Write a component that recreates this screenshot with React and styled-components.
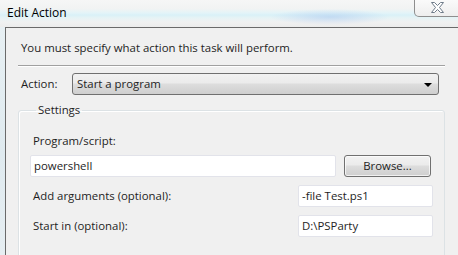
import React from 'react';
import styled, { createGlobalStyle } from 'styled-components';

const Global = createGlobalStyle`
  html, body {
    margin: 0;
    padding: 0;
    overflow: hidden;
  }
  body {
    font-family: "Open Sans", "Noto Sans", sans-serif;
    font-size: 11.4px;
    color: #1e1e1e;
  }
`

const Frame = styled.div`
  width: 458px;
  height: 255px;
  display: flex;
  flex-direction: column;
  overflow: hidden;
  background: linear-gradient(to bottom, #e9f1f4 0%, #dfeaef 60%, #e6eef2 100%);
`

const TitleBar = styled.div`
  height: 27px;
  flex: none;
  display: flex;
  align-items: flex-start;
  padding-left: 7px;
  background:
    radial-gradient(ellipse 60px 8px at 330px 17px, rgba(170, 200, 240, 0.55), transparent),
    linear-gradient(to bottom,
      #f6f6f6 0px,
      #f1f3f3 9px,
      #e3f4f8 13px,
      #d9f1f7 15px,
      #e6f3f5 18px,
      #f0f1f1 22px,
      #ececec 27px);
`

const Title = styled.span`
  margin-top: 5px;
  font-size: 12px;
  line-height: 16px;
  color: #000;
`

const CloseButton = styled.div`
  margin-left: auto;
  margin-top: -1px;
  margin-right: -6px;
  width: 50px;
  height: 18px;
  box-sizing: border-box;
  border: 1px solid #8e8e8e;
  border-top: none;
  border-radius: 0 0 5px 5px;
  background: linear-gradient(to bottom, #fbfbfb, #eeeeee);
  display: flex;
  align-items: center;
  justify-content: center;
  padding-right: 4px;
`

const Client = styled.div`
  flex: 1;
  margin-left: 5px;
  border-left: 1px solid #6a6a6a;
  border-top: 1px solid #6a6a6a;
  background: #f0f0f0;
  padding: 12px 13px 0 12px;
  display: flex;
  flex-direction: column;
`

const Intro = styled.div`
  line-height: 16px;
  padding-left: 3px;
`

const Separator = styled.div`
  margin-top: 9px;
  height: 1px;
  background: #a0a0a0;
  box-shadow: 0 1px 0 #ffffff;
`

const ActionRow = styled.div`
  margin-top: 7px;
  display: flex;
  align-items: center;
`

const Label = styled.span`
  line-height: 16px;
  padding-left: ${p => p.$indent || 0}px;
  width: ${p => (p.$width ? `${p.$width}px` : 'auto')};
  flex: ${p => (p.$grow ? 1 : 'none')};
`

const Select = styled.div`
  width: 367px;
  height: 22px;
  box-sizing: border-box;
  border: 1px solid #707070;
  border-radius: 3px;
  background: linear-gradient(to bottom, #f2f2f2 0%, #ebebeb 45%, #dddddd 50%, #cfcfcf 100%);
  display: flex;
  align-items: center;
  padding: 0 6px 0 4px;
  line-height: 16px;
`

const SelectText = styled.span`
  flex: 1;
`

const Arrow = styled.span`
  width: 0;
  height: 0;
  border-left: 4px solid transparent;
  border-right: 4px solid transparent;
  border-top: 4px solid #000;
  margin-top: 1px;
`

const Group = styled.fieldset`
  margin: 7px 0 0 0;
  padding: 15px 11px 20px 11px;
  border: 1px solid #dce2e5;
  border-radius: 3px;
  box-shadow: inset 1px 1px 0 #ffffff;
  min-width: 0;
`

const Legend = styled.legend`
  margin-left: 6px;
  padding: 0 2px;
  line-height: 16px;
`

const FieldLabel = styled.div`
  line-height: 16px;
  padding-left: 3px;
  margin-bottom: 6px;
`

const Row = styled.div`
  display: flex;
  align-items: center;
  margin-bottom: ${p => p.$last ? 0 : 8}px;
`

const Input = styled.div`
  width: ${p => p.$width}px;
  height: 22px;
  box-sizing: border-box;
  border: 1px solid #e2e3ea;
  border-radius: 2px;
  background: #ffffff;
  padding: 2px 3px 0;
  line-height: 16px;
`

const Button = styled.div`
  margin-left: 8px;
  width: 87px;
  height: 22px;
  box-sizing: border-box;
  border: 1px solid #707070;
  border-radius: 3px;
  background: linear-gradient(to bottom, #f2f2f2 0%, #ebebeb 45%, #dddddd 50%, #cfcfcf 100%);
  box-shadow: inset 0 0 0 1px rgba(255, 255, 255, 0.7);
  display: flex;
  align-items: center;
  justify-content: center;
  line-height: 16px;
`

const CloseIcon = () => (
  <svg width="15" height="11" viewBox="0 0 15 11">
    <path
      d="M1.5 0.5 H4.5 L7.5 3.5 L10.5 0.5 H13.5 L9.5 5.5 L13.5 10.5 H10.5 L7.5 7.5 L4.5 10.5 H1.5 L5.5 5.5 Z"
      fill="#ffffff"
      stroke="#6f7c8a"
      strokeWidth="1"
      strokeLinejoin="round"
    />
  </svg>
)

export default function App() {
  return (
    <>
      <Global />
      <Frame>
        <TitleBar>
          <Title>Edit Action</Title>
          <CloseButton>
            <CloseIcon />
          </CloseButton>
        </TitleBar>
        <Client>
          <Intro>You must specify what action this task will perform.</Intro>
          <Separator />
          <ActionRow>
            <Label $indent={3} $width={51}>Action:</Label>
            <Select>
              <SelectText>Start a program</SelectText>
              <Arrow />
            </Select>
          </ActionRow>
          <Group>
            <Legend>Settings</Legend>
            <FieldLabel>Program/script:</FieldLabel>
            <Row>
              <Input $width={306}>powershell</Input>
              <Button>Browse...</Button>
            </Row>
            <Row>
              <Label $indent={3} $grow>Add arguments (optional):</Label>
              <Input $width={135}>-file Test.ps1</Input>
            </Row>
            <Row $last>
              <Label $indent={3} $grow>Start in (optional):</Label>
              <Input $width={135}>D:\PSParty</Input>
            </Row>
          </Group>
        </Client>
      </Frame>
    </>
  );
}
